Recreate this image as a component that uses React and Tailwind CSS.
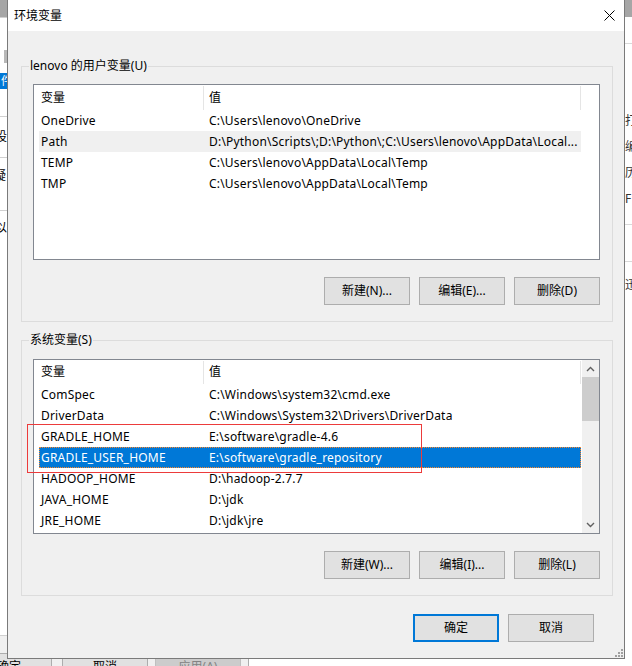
import React from 'react';

const userVars = [
  ['OneDrive', 'C:\\Users\\lenovo\\OneDrive'],
  ['Path', 'D:\\Python\\Scripts\\;D:\\Python\\;C:\\Users\\lenovo\\AppData\\Local...'],
  ['TEMP', 'C:\\Users\\lenovo\\AppData\\Local\\Temp'],
  ['TMP', 'C:\\Users\\lenovo\\AppData\\Local\\Temp'],
];

const sysVars = [
  ['ComSpec', 'C:\\Windows\\system32\\cmd.exe'],
  ['DriverData', 'C:\\Windows\\System32\\Drivers\\DriverData'],
  ['GRADLE_HOME', 'E:\\software\\gradle-4.6'],
  ['GRADLE_USER_HOME', 'E:\\software\\gradle_repository'],
  ['HADOOP_HOME', 'D:\\hadoop-2.7.7'],
  ['JAVA_HOME', 'D:\\jdk'],
  ['JRE_HOME', 'D:\\jdk\\jre'],
];

function Row({ name, value, state }) {
  const cls =
    state === 'selected'
      ? 'bg-[#0078d7] text-white outline-1 outline-dotted outline-[#ff8728] -outline-offset-1'
      : state === 'inactive'
      ? 'bg-[#f0f0f0]'
      : '';
  return (
    <div className={`flex h-[21px] w-[542px] items-center tracking-[0.2px] ${cls}`}>
      <div className="w-[168px] shrink-0 pl-[2px] whitespace-nowrap overflow-hidden">{name}</div>
      <div className="flex-1 min-w-0 pl-[2px] whitespace-nowrap overflow-hidden">{value}</div>
    </div>
  );
}

function Chevron({ up }) {
  return (
    <svg width="9" height="6" viewBox="0 0 9 6">
      <path
        d={up ? 'M1 5 L4.5 1.5 L8 5' : 'M1 1 L4.5 4.5 L8 1'}
        fill="none"
        stroke="#606060"
        strokeWidth="1.4"
      />
    </svg>
  );
}

function ScrollBar() {
  return (
    <div className="w-[17px] shrink-0 bg-[#f0f0f0] flex flex-col">
      <div className="h-[17px] flex items-center justify-center"><Chevron up /></div>
      <div className="h-[44px] bg-[#cdcdcd]" />
      <div className="flex-1" />
      <div className="h-[17px] flex items-center justify-center"><Chevron /></div>
    </div>
  );
}

function VarList({ rows, headH, boxH, scroll, inactive, selected }) {
  return (
    <div className={`flex border border-[#828790] bg-white ${boxH}`}>
      <div className="flex-1 min-w-0 flex flex-col">
        <div className={`flex shrink-0 ${headH}`}>
          <div className="w-[169px] shrink-0 pl-[7px] flex items-center">变量</div>
          <div className="w-px mt-[1px] bg-[#e5e5e5]" />
          <div className="w-[376px] shrink-0 pl-[5px] flex items-center">值</div>
          <div className="w-px mt-[1px] bg-[#e5e5e5]" />
        </div>
        <div className="pl-[5px] flex flex-col">
          {rows.map(([n, v]) => (
            <Row
              key={n}
              name={n}
              value={v}
              state={n === selected ? 'selected' : n === inactive ? 'inactive' : ''}
            />
          ))}
        </div>
      </div>
      {scroll && <ScrollBar />}
    </div>
  );
}

function Btn({ children, primary }) {
  return (
    <div
      className={`w-[86px] h-[28px] flex items-center justify-center bg-[#e1e1e1] ${
        primary ? 'border-2 border-[#0078d7]' : 'border border-[#adadad]'
      }`}
    >
      {children}
    </div>
  );
}

function Group({ title, children, top }) {
  return (
    <fieldset className="border border-[#dcdcdc]">
      <legend className="ml-[7px] px-[1px] leading-[16px]">{title}</legend>
      <div className={`${top} pl-[11px] pr-[12px] pb-[16px] flex flex-col`}>{children}</div>
    </fieldset>
  );
}

function Grip() {
  return (
    <svg width="10" height="10" viewBox="0 0 10 10">
      {[[8, 2], [5, 5], [8, 5], [2, 8], [5, 8], [8, 8]].map(([x, y]) => (
        <rect key={x + '-' + y} x={x} y={y} width="2" height="2" fill="#a0a0a0" />
      ))}
    </svg>
  );
}

function Dialog() {
  return (
    <div className="absolute left-[7px] top-0 w-[618px] h-[659px] border-x border-b border-[#7a7a7a] bg-[#f0f0f0] flex flex-col">
      <div className="h-[31px] shrink-0 bg-white flex items-center justify-between pl-[6px] pr-[9px]">
        <span>环境变量</span>
        <svg width="11" height="11" viewBox="0 0 11 11">
          <path d="M0.5 0.5 L10.5 10.5 M10.5 0.5 L0.5 10.5" stroke="#000" strokeWidth="1" />
        </svg>
      </div>
      <div className="flex-1 flex flex-col pl-[13px] pr-[11px] pt-[27px]">
        <Group title="lenovo 的用户变量(U)" top="pt-[10px]">
          <VarList rows={userVars} headH="h-[25px]" boxH="h-[176px]" inactive="Path" />
          <div className="mt-[17px] flex justify-end gap-[9px]">
            <Btn>新建(N)...</Btn>
            <Btn>编辑(E)...</Btn>
            <Btn>删除(D)</Btn>
          </div>
        </Group>
        <div className="mt-[10px]">
          <Group title="系统变量(S)" top="pt-[11px]">
            <VarList
              rows={sysVars}
              headH="h-[24px]"
              boxH="h-[175px]"
              scroll
              selected="GRADLE_USER_HOME"
            />
            <div className="mt-[17px] flex justify-end gap-[9px]">
              <Btn>新建(W)...</Btn>
              <Btn>编辑(I)...</Btn>
              <Btn>删除(L)</Btn>
            </div>
          </Group>
        </div>
        <div className="mt-[18px] flex justify-end gap-[8px] pr-[18px]">
          <div className="w-[87px]"><Btn primary>确定</Btn></div>
          <div className="w-[87px]"><Btn>取消</Btn></div>
        </div>
      </div>
      {/* annotation drawn over the list */}
      <div className="absolute left-[19px] top-[424px] w-[395px] h-[49px] border border-[#ec3b3b]" />
      <div className="absolute right-[1px] bottom-[1px]"><Grip /></div>
    </div>
  );
}

function RightWindow() {
  return (
    <div className="absolute left-[248px] top-[17px] right-0 bottom-0 bg-white flex flex-col pl-[377px] text-[#333]">
      <div className="h-[26px]" />
      <div className="h-px bg-[#d9d9d9]" />
      <div className="h-[64px]" />
      <div className="h-[26px] flex items-center">打</div>
      <div className="h-[26px] flex items-center">编</div>
      <div className="h-[26px] flex items-center">历</div>
      <div className="h-[26px] flex items-center">F</div>
      <div className="h-[12px]" />
      <div className="h-px bg-[#d9d9d9]" />
      <div className="h-[36px]" />
      <div className="h-px bg-[#d9d9d9]" />
      <div className="h-[14px]" />
      <div className="h-[18px] flex items-center">迅</div>
    </div>
  );
}

function LeftWindow() {
  return (
    <div className="absolute left-0 top-[17px] w-[249px] h-[680px] bg-[#f0f0f0] border-r border-[#adadad] flex flex-col">
      <div className="h-[619px] bg-white border-t border-b border-[#d0d0d0] flex flex-col">
        <div className="h-[32px]" />
        <div className="h-[13px] w-[3px] ml-[4px] bg-[#b8b8b8]" />
        <div className="h-[10px]" />
        <div className="h-[16px] bg-[#0078d7] text-white flex items-center text-[11px] pl-[1px]">件</div>
        <div className="h-[27px]" />
        <div className="h-px bg-[#d0d0d0]" />
        <div className="h-[40px] flex items-center -ml-[5px]">设</div>
        <div className="h-px bg-[#d0d0d0]" />
        <div className="h-[36px] flex items-center -ml-[6px]">疑</div>
        <div className="h-[16px]" />
        <div className="h-px bg-[#d0d0d0]" />
        <div className="h-[34px] flex items-center -ml-[5px]">以</div>
      </div>
      <div className="mt-[17px] flex -ml-[34px]">
        <div className="w-[86px] h-[28px] border border-[#adadad] bg-[#e1e1e1] flex items-center justify-center">确定</div>
        <div className="ml-[10px] w-[86px] h-[28px] border border-[#adadad] bg-[#e1e1e1] flex items-center justify-center">取消</div>
        <div className="ml-[7px] w-[86px] h-[28px] border border-[#bfbfbf] bg-[#cccccc] text-[#838383] flex items-center justify-center">应用(A)</div>
      </div>
    </div>
  );
}

export default function App() {
  return (
    <div className="relative w-[632px] h-[666px] overflow-hidden bg-[#a6a6a6] text-[12px] text-black font-['Noto_Sans','Noto_Sans_CJK_SC',sans-serif]">
      <RightWindow />
      <LeftWindow />
      <Dialog />
    </div>
  );
}
